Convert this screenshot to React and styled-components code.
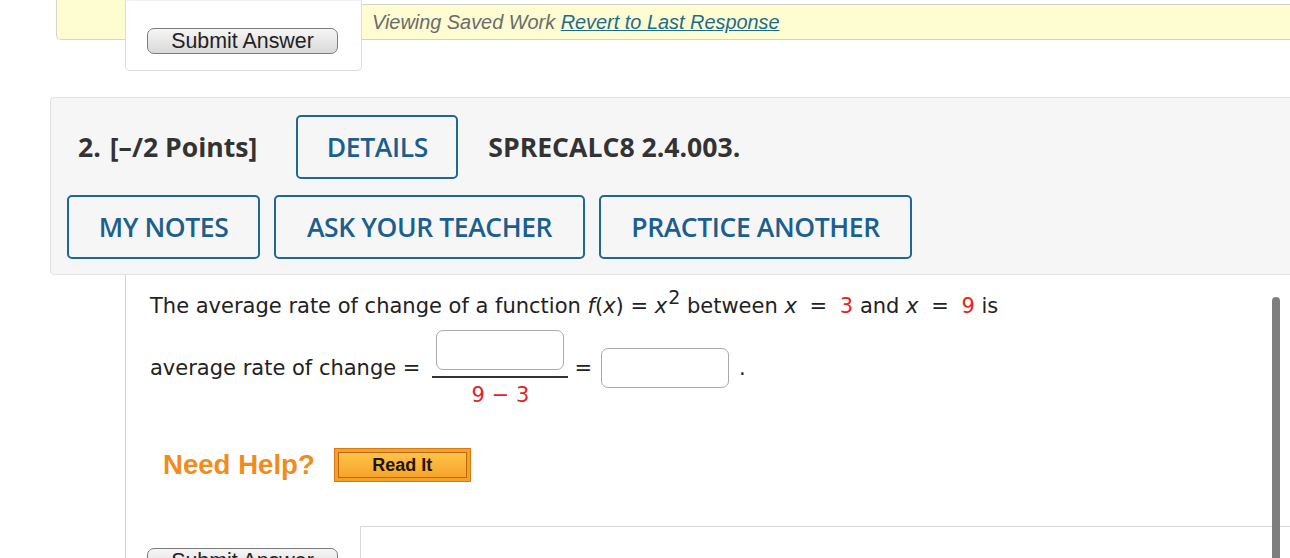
import React from "react";
import styled, { createGlobalStyle } from "styled-components";

const GlobalStyle = createGlobalStyle`
  html, body {
    margin: 0;
    padding: 0;
    background: #ffffff;
    overflow: hidden;
  }
`;

const Page = styled.div`
  width: 1340px;
  position: relative;
  height: 558px;
  overflow: hidden;
`;

// ---------- saved work strip (end of previous question) ----------

const SavedRow = styled.div`
  display: flex;
  align-items: flex-start;
  margin-left: ${(p) => p.$left || 0}px;
  margin-top: ${(p) => p.$top || 0}px;
`;

const YellowTail = styled.div`
  width: 69px;
  height: 40px;
  background: #fefdd2;
  border: 1px solid #d6d6cc;
  border-top: none;
  border-right: none;
  border-bottom-left-radius: 5px;
  box-sizing: border-box;
`;

const SubmitPanel = styled.div`
  width: 237px;
  height: ${(p) => p.$height}px;
  background: #ffffff;
  border: 1px solid #dcdcdc;
  border-top-color: #f0f0f0;
  border-radius: 0 0 5px 5px;
  box-sizing: border-box;
  padding: ${(p) => p.$padTop}px 0 0 21px;
  ${(p) => p.$open && "border: none; border-radius: 0; width: 213px; padding-left: 0;"}
`;

const SubmitButton = styled.button`
  width: 191px;
  height: 26px;
  padding: 0;
  font-family: "Liberation Sans", Arial, sans-serif;
  font-size: 21.4px;
  color: #222;
  border: 1.5px solid #7c7c7c;
  border-radius: 7px;
  background: linear-gradient(#f6f6f6, #d9d9d9);
  line-height: 22px;
`;

const MessageBar = styled.div`
  flex: 1;
  margin-top: 4px;
  height: 36px;
  box-sizing: border-box;
  background: #fefdd2;
  border-top: 1px solid #d2d2c8;
  border-bottom: 1px solid #d2d2c8;
  padding: 6px 0 0 10px;
  font-family: "Liberation Sans", Arial, sans-serif;
  font-style: italic;
  font-size: 19.9px;
  color: #6b6b6b;

  a {
    color: #1c6c8e;
    text-decoration: underline;
  }
`;

const NextBox = styled.div`
  flex: 1;
  height: 60px;
  border-top: 1px solid #d8d8d8;
  border-left: 1px solid #d8d8d8;
  background: #ffffff;
`;

// ---------- question header ----------

const QuestionPanel = styled.div`
  margin: 26px 0 0 50px;
  background: #f6f6f6;
  border: 1px solid #e1e1e1;
  border-radius: 4px;
  padding: 17px 0 15px 16px;
  display: flex;
  flex-direction: column;
  gap: 16px;
  font-family: "Open Sans", sans-serif;
`;

const HeaderRow = styled.div`
  display: flex;
  align-items: center;
  gap: ${(p) => p.$gap}px;
  padding-left: ${(p) => p.$indent || 0}px;
`;

const Label = styled.span`
  font-weight: 700;
  font-size: 26.6px;
  color: #333;
  margin: ${(p) => p.$margin || 0};
`;

const OutlineButton = styled.button`
  height: 64px;
  width: ${(p) => p.$w}px;
  box-sizing: border-box;
  background: transparent;
  border: 2px solid #1e6797;
  border-radius: 5px;
  font-family: "Open Sans", sans-serif;
  font-weight: 600;
  font-size: 26.5px;
  color: #1b5f8e;
  letter-spacing: -0.4px;
  padding: 0;
`;

// ---------- question body ----------

const Body = styled.div`
  margin-left: 125px;
  border-left: 1px solid #d4d4d4;
  padding: 17px 0 0 21px;
  font-family: "DejaVu Sans", Verdana, sans-serif;
  font-size: 21px;
  color: #222;
`;

const TextLine = styled.div`
  height: 28px;
  line-height: 28px;
  padding-left: 3px;
  white-space: pre;
`;

const MathLine = styled.div`
  display: flex;
  align-items: center;
  white-space: pre;
  height: 96px;
  padding-left: 3px;
`;

const Var = styled.i`
  font-style: italic;
`;

const Eq = styled.span`
  margin: 0 ${(p) => p.$space ?? 6}px;
`;

const Red = styled.span`
  color: #e3231f;
`;

const Sup = styled.sup`
  font-size: 19px;
  vertical-align: 9px;
  line-height: 0;
  margin-left: 1px;
`;

const Fraction = styled.span`
  display: inline-flex;
  flex-direction: column;
  align-items: center;
  margin: 0 6px 0 12px;
  transform: translateY(1px);
`;

const Numerator = styled.span`
  display: flex;
  padding: 0 4px 6px;
  border-bottom: 2px solid #333;
`;

const Denominator = styled.span`
  padding-top: 4px;
  line-height: 26px;
`;

const AnswerBox = styled.span`
  display: inline-block;
  width: 128px;
  height: 40px;
  box-sizing: border-box;
  border: 1.5px solid #a9a9a9;
  border-radius: 7px;
  background: #fff;
  margin: ${(p) => p.$margin || 0};
`;

const HelpRow = styled.div`
  display: flex;
  align-items: center;
  gap: 19px;
  margin: 32px 0 0 16px;
`;

const NeedHelp = styled.span`
  font-family: "Liberation Sans", Arial, sans-serif;
  font-weight: 700;
  font-size: 27.6px;
  color: #f08c1c;
`;

const ReadIt = styled.button`
  width: 137px;
  height: 34px;
  padding: 3px;
  background: #f6a02a;
  border: 1px solid #d77a10;
  box-sizing: border-box;

  span {
    display: block;
    height: 100%;
    box-sizing: border-box;
    border: 1px solid #b86a12;
    background: linear-gradient(#ffc24a, #f7a52a);
    font-family: "Liberation Sans", Arial, sans-serif;
    font-weight: 700;
    font-size: 18px;
    line-height: 25px;
    color: #1f1405;
  }
`;

const Scrollbar = styled.div`
  position: absolute;
  left: 1272px;
  top: 297px;
  width: 8px;
  height: 280px;
  background: #7e7e7e;
  border-radius: 4px;
`;

const App = () => {
  return (
    <Page>
      <GlobalStyle />
      <SavedRow $left={56}>
        <YellowTail />
        <SubmitPanel $height={71} $padTop={27}>
          <SubmitButton>Submit Answer</SubmitButton>
        </SubmitPanel>
        <MessageBar>
          Viewing Saved Work <a href="#revert">Revert to Last Response</a>
        </MessageBar>
      </SavedRow>

      <QuestionPanel>
        <HeaderRow $indent={11} $gap={0}>
          <Label>2.</Label>
          <Label $margin="0 39px 0 9px">[–/2 Points]</Label>
          <OutlineButton $w={162}>DETAILS</OutlineButton>
          <Label $margin="0 0 0 30px">SPRECALC8 2.4.003.</Label>
        </HeaderRow>
        <HeaderRow $gap={14}>
          <OutlineButton $w={193}>MY NOTES</OutlineButton>
          <OutlineButton $w={311}>ASK YOUR TEACHER</OutlineButton>
          <OutlineButton $w={313}>PRACTICE ANOTHER</OutlineButton>
        </HeaderRow>
      </QuestionPanel>

      <Body>
        <TextLine>
          The average rate of change of a function <Var>f</Var>(<Var>x</Var>) = <Var>x</Var>
          <Sup>2</Sup> between <Var>x</Var> <Eq>=</Eq> <Red>3</Red> and <Var>x</Var> <Eq>=</Eq>{" "}
          <Red>9</Red> is
        </TextLine>
        <MathLine>
          average rate of change =
          <Fraction>
            <Numerator>
              <AnswerBox />
            </Numerator>
            <Denominator>
              <Red>9 − 3</Red>
            </Denominator>
          </Fraction>
          =
          <AnswerBox $margin="0 10px 0 9px" />.
        </MathLine>
        <HelpRow>
          <NeedHelp>Need Help?</NeedHelp>
          <ReadIt>
            <span>Read It</span>
          </ReadIt>
        </HelpRow>
        <SavedRow $top={44}>
          <SubmitPanel $open $height={60} $padTop={22}>
            <SubmitButton>Submit Answer</SubmitButton>
          </SubmitPanel>
          <NextBox />
        </SavedRow>
      </Body>

      <Scrollbar />
    </Page>
  );
};

export default App;
